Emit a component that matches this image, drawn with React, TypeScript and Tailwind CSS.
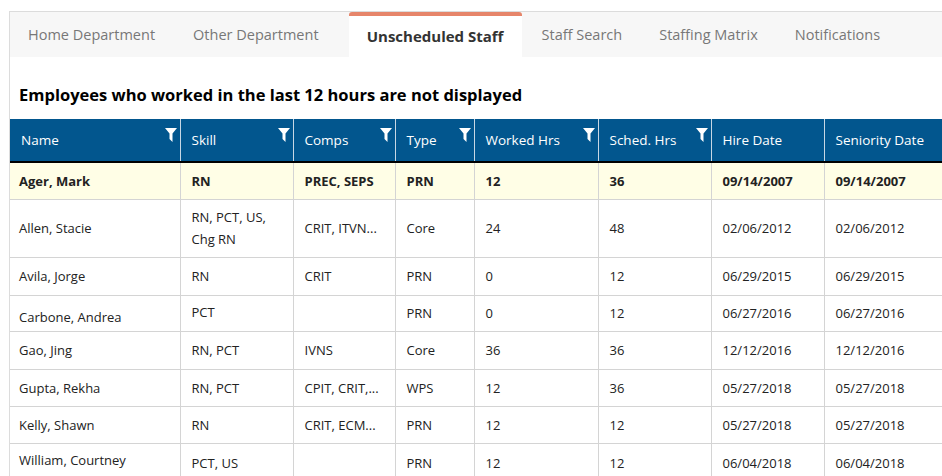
import React from "react";

const cols = [170, 113, 102, 79, 124, 113, 113, 119];
const heads = ["Name", "Skill", "Comps", "Type", "Worked Hrs", "Sched. Hrs", "Hire Date", "Seniority Date"];
const filt = [true, true, true, true, true, true, false, false];

type Row = { h: number; c: string[]; bold?: boolean; align?: string[] };
const rows: Row[] = [
  { h: 37, bold: true, c: ["Ager, Mark", "RN", "PREC, SEPS", "PRN", "12", "36", "09/14/2007", "09/14/2007"] },
  { h: 58, c: ["Allen, Stacie", "RN, PCT, US, Chg RN", "CRIT, ITVN...", "Core", "24", "48", "02/06/2012", "02/06/2012"] },
  { h: 38, c: ["Avila, Jorge", "RN", "CRIT", "PRN", "0", "12", "06/29/2015", "06/29/2015"] },
  { h: 36, c: ["Carbone, Andrea", "PCT", "", "PRN", "0", "12", "06/27/2016", "06/27/2016"], align: ["end", "start", "center", "center", "center", "center", "center", "center"] },
  { h: 38, c: ["Gao, Jing", "RN, PCT", "IVNS", "Core", "36", "36", "12/12/2016", "12/12/2016"] },
  { h: 37, c: ["Gupta, Rekha", "RN, PCT", "CPIT, CRIT,...", "WPS", "12", "36", "05/27/2018", "05/27/2018"] },
  { h: 37, c: ["Kelly, Shawn", "RN", "CRIT, ECM...", "PRN", "12", "12", "05/27/2018", "05/27/2018"] },
  { h: 40, c: ["William, Courtney", "PCT, US", "", "PRN", "12", "12", "06/04/2018", "06/04/2018"], align: ["start", "center", "center", "center", "center", "center", "center", "center"] },
];

const Filter = () => (
  <svg width="12" height="14" viewBox="0 0 12 14" className="absolute right-[3px] top-[9px]">
    <path d="M0 0H12L7.5 5.5V14L4.5 11V5.5Z" fill="#fff" />
  </svg>
);

const tabs = ["Home Department", "Other Department", "Unscheduled Staff", "Staff Search", "Staffing Matrix", "Notifications"];

export default function App() {
  return (
    <div className="w-[942px] h-[476px] overflow-hidden bg-white pl-[9px] pt-[11px]" style={{ fontFamily: "'Open Sans', 'Noto Sans', sans-serif" }}>
      <div className="border-l border-t border-[#dcdcdc] h-[470px] overflow-hidden">
        <div className="flex h-[45px] bg-[#f7f7f7] pl-[0px]">
          {tabs.map((t, i) =>
            i === 2 ? (
              <div key={t} className="ml-[11px] mr-[1px] w-[173px] bg-white border-t-[4px] border-[#e6856a] rounded-t-[3px] flex items-center justify-center text-[15px] font-bold text-[#333]">{t}</div>
            ) : (
              <div key={t} className={`flex items-center text-[14.5px] text-[#777] ${i === 0 ? "pl-[18px] pr-[19px]" : i === 1 ? "px-[19px]" : "pl-[19px] pr-[18px]"}`}>{t}</div>
            )
          )}
        </div>
        <div className="h-[62px] flex items-end pb-[11px] pl-[9px] text-[16.5px] font-bold text-black">Employees who worked in the last 12 hours are not displayed</div>
        <table className="border-collapse table-fixed text-[13px] text-[#222]" style={{ width: 933 }}>
          <colgroup>{cols.map((w, i) => <col key={i} style={{ width: w }} />)}</colgroup>
          <thead>
            <tr className="h-[43px] bg-[#02568e] text-white border-b-2 border-black">
              {heads.map((h, i) => (
                <th key={h} className="relative text-left font-normal text-[13.5px] pl-[11px] border-r border-[#c8d7e4]">
                  {h}
                  {filt[i] && <Filter />}
                </th>
              ))}
            </tr>
          </thead>
          <tbody>
            {rows.map((r, ri) => (
              <tr key={ri} className={`border-b border-[#d4d4d4] ${r.bold ? "bg-[#fffee6] font-bold" : ""}`} style={{ height: r.h }}>
                {r.c.map((c, ci) => {
                  const a = r.align?.[ci] ?? "center";
                  return (
                    <td key={ci} className={`border-r border-[#d4d4d4] leading-[22px] ${ci === 0 ? (r.bold ? "pl-[9px]" : "pl-[9px]") : "pl-[11px]"} ${a === "end" ? "align-bottom pb-[3px]" : a === "start" ? "align-top pt-[5px]" : "align-middle"} pr-[6px] truncate ${ci === 1 && ri === 1 ? "whitespace-normal" : "whitespace-nowrap"}`}>{c}</td>
                  );
                })}
              </tr>
            ))}
          </tbody>
        </table>
      </div>
    </div>
  );
}
